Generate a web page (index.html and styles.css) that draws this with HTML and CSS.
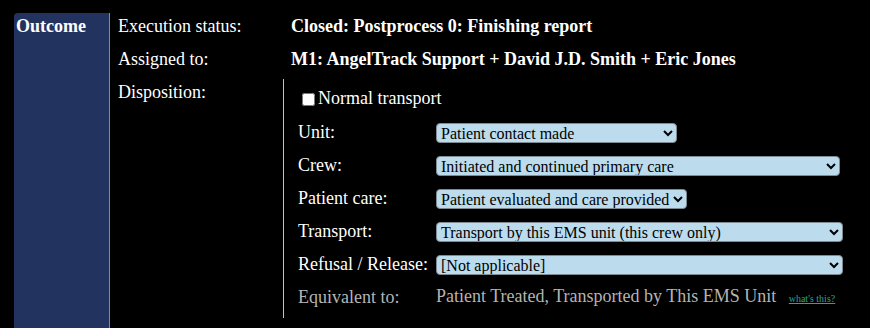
FILE: index.html
```html
<!DOCTYPE html>
<html>
<head>
<meta charset="utf-8">
<link rel="stylesheet" href="styles.css">
</head>
<body>
<div class="outer">
  <div class="side">Outcome</div>
  <div class="main">
    <div class="lbl">Execution status:</div>
    <div class="val"><b>Closed: Postprocess 0: Finishing report</b></div>
    <div class="lbl">Assigned to:</div>
    <div class="val"><b>M1: AngelTrack Support + David J.D. Smith + Eric Jones</b></div>
    <div class="lbl">Disposition:</div>
    <div class="disp">
      <div class="box">
        <div class="chkrow"><input type="checkbox" class="chk">Normal transport</div>
        <div class="inner">
          <div class="ilbl">Unit:</div>
          <div><select class="sel w-unit"><option>Patient contact made</option></select></div>
          <div class="ilbl">Crew:</div>
          <div><select class="sel w-crew"><option>Initiated and continued primary care</option></select></div>
          <div class="ilbl">Patient care:</div>
          <div><select class="sel"><option>Patient evaluated and care provided</option></select></div>
          <div class="ilbl">Transport:</div>
          <div><select class="sel w-wide"><option>Transport by this EMS unit (this crew only)</option></select></div>
          <div class="ilbl">Refusal / Release:</div>
          <div><select class="sel w-wide"><option>[Not applicable]</option></select></div>
          <div class="ilbl gray">Equivalent to:</div>
          <div class="gray equiv">Patient Treated, Transported by This EMS Unit <a href="#" class="what">what's this?</a></div>
        </div>
      </div>
    </div>
  </div>
</div>
</body>
</html>
```

FILE: styles.css
```css
html, body {
  margin: 0;
  padding: 0;
  background: #000;
  color: #fff;
  font-family: "Liberation Serif", "Times New Roman", serif;
  font-size: 18px;
  line-height: 21px;
}
.outer {
  display: flex;
  align-items: stretch;
  margin: 13px 0 0 14px;
}
.side {
  width: 93px;
  padding: 3px 0 0 2px;
  background: #22335f;
  border-right: 1px solid #8a8a8a;
  border-top-left-radius: 4px;
  font-weight: bold;
  min-height: 312px;
}
.main {
  margin-left: 8px;
  display: grid;
  grid-template-columns: 165px auto;
  align-content: start;
}
.lbl {
  padding: 3px 0 9px 0;
}
.val {
  padding: 3px 0 9px 8px;
}
.disp {
  padding-bottom: 8px;
}
.box {
  border-left: 1px solid #c4c4c4;
  padding: 0 0 4px 14px;
  width: 560px;
}
.chkrow {
  padding: 9px 0 7px 0;
  height: 21px;
  display: flex;
  align-items: flex-end;
}
.chk {
  width: 13px;
  height: 13px;
  margin: 0 3px 0 4px;
  position: relative;
  top: -3px;
}
.inner {
  display: grid;
  grid-template-columns: 138px auto;
  grid-auto-rows: 33px;
  align-items: center;
}
.sel {
  height: 20px;
  font-family: "Liberation Serif", "Times New Roman", serif;
  font-size: 16px;
  color: #000;
  background-color: #bcdcee;
  border: 1px solid #7f8a92;
  border-radius: 4px;
  padding: 0;
  display: block;
}
.w-unit { width: 241px; }
.w-crew { width: 404px; }
.w-wide { width: 407px; }
.gray { color: #b4b4b4; }
.equiv {
  white-space: nowrap;
}
.what {
  font-size: 10px;
  color: #27a596;
  margin-left: 8px;
}
```
